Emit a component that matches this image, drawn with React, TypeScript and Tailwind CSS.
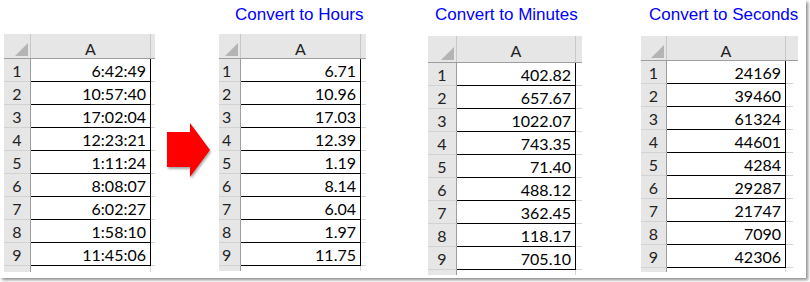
import React from "react";

type SheetProps = {
  values: string[];
  rhW: string;
  colW: string;
  extW: string;
  headH: string;
  stripH: string;
  rhCls: string;
};

function Sheet({ values, rhW, colW, extW, headH, stripH, rhCls }: SheetProps) {
  return (
    <div className="flex flex-col font-['Lato',sans-serif] text-[16px] leading-[23px] text-black">
      <div className={`flex ${headH} bg-[#e6e6e6] border-b border-[#9e9e9e]`}>
        <div className={`${rhW} flex items-end justify-end pr-[2px] pb-[2px] border-r border-[#c8c8c8]`}>
          <svg width="13" height="13" viewBox="0 0 13 13">
            <polygon points="13,0 13,13 0,13" fill="#b4b4b4" />
          </svg>
        </div>
        <div className={`${colW} pt-[3px] text-center border-r border-[#c8c8c8] text-[#222]`}>A</div>
        <div className={extW} />
      </div>
      {values.map((v, i) => (
        <div key={i} className="flex h-[23px]">
          <div className={`${rhW} ${rhCls} bg-[#e6e6e6] border-b border-r border-b-[#d2d2d2] border-r-[#9e9e9e] text-[#222]`}>
            {i + 1}
          </div>
          <div className={`${colW} border-b border-r border-black text-right pr-[4px]`}>{v}</div>
          <div className={`${extW} border-b border-[#d4d4d4]`} />
        </div>
      ))}
      <div className={`flex ${stripH}`}>
        <div className={`${rhW} bg-[#e6e6e6] border-r border-[#9e9e9e]`} />
        <div className={`${colW} border-r border-[#d4d4d4]`} />
        <div className={extW} />
      </div>
    </div>
  );
}

function Title({ text, cls }: { text: string; cls: string }) {
  return (
    <div className={`h-[20px] mt-[5px] font-['Liberation_Sans',Arial,sans-serif] text-[17px] leading-[20px] text-[#0000ff] whitespace-nowrap ${cls}`}>
      {text}
    </div>
  );
}

export default function App() {
  const t1 = ["6:42:49", "10:57:40", "17:02:04", "12:23:21", "1:11:24", "8:08:07", "6:02:27", "1:58:10", "11:45:06"];
  const t2 = ["6.71", "10.96", "17.03", "12.39", "1.19", "8.14", "6.04", "1.97", "11.75"];
  const t3 = ["402.82", "657.67", "1022.07", "743.35", "71.40", "488.12", "362.45", "118.17", "705.10"];
  const t4 = ["24169", "39460", "61324", "44601", "4284", "29287", "21747", "7090", "42306"];

  return (
    <div className="w-[810px] h-[282px] bg-white overflow-hidden">
      <div className="w-[806px] h-[278px] bg-white shadow-[2px_2px_3px_rgba(0,0,0,0.45)] flex items-start">
        <div className="ml-[4px] mt-[34px]">
          <Sheet values={t1} rhW="w-[27px]" colW="w-[120px]" extW="w-[4px]" headH="h-[25px]" stripH="h-[6px]" rhCls="text-center" />
        </div>
        <div className="ml-[10px] mt-[122px]">
          <svg width="50" height="60" viewBox="0 0 50 60" style={{ filter: "drop-shadow(1px 2px 1px rgba(0,0,0,0.35))" }}>
            <polygon points="2,10 25,10 25,1 45,28 25,55 25,45 2,45" fill="#ff0000" />
          </svg>
        </div>
        <div className="ml-[4px] flex flex-col">
          <Title text="Convert to Hours" cls="ml-[16px]" />
          <div className="mt-[9px]">
            <Sheet values={t2} rhW="w-[22px]" colW="w-[120px]" extW="w-[5px]" headH="h-[25px]" stripH="h-[5px]" rhCls="text-left pl-[3px]" />
          </div>
        </div>
        <div className="ml-[62px] flex flex-col">
          <Title text="Convert to Minutes" cls="ml-[7px]" />
          <div className="mt-[11px]">
            <Sheet values={t3} rhW="w-[29px]" colW="w-[119px]" extW="w-[6px]" headH="h-[27px]" stripH="h-[5px]" rhCls="text-center" />
          </div>
        </div>
        <div className="ml-[59px] flex flex-col">
          <Title text="Convert to Seconds" cls="ml-[8px]" />
          <div className="mt-[11px]">
            <Sheet values={t4} rhW="w-[26px]" colW="w-[119px]" extW="w-[7px]" headH="h-[25px]" stripH="h-[4px]" rhCls="text-center" />
          </div>
        </div>
      </div>
    </div>
  );
}
